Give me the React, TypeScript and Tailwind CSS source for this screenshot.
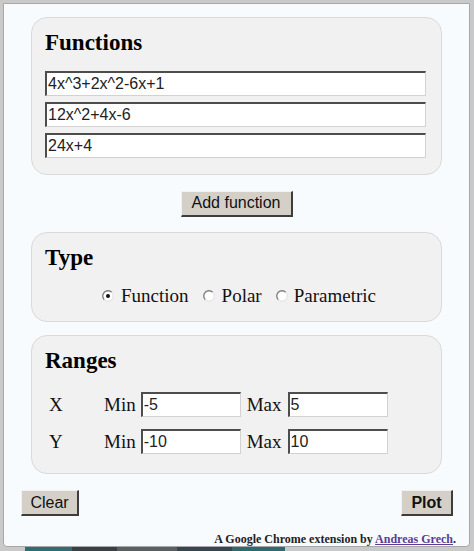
import React from "react";

const serif = "font-['Liberation_Serif','Times_New_Roman',serif]";
const sans = "font-['Liberation_Sans',Arial,sans-serif]";

const inputCls =
  `h-[25px] bg-white border-t-2 border-l-2 border-b border-r border-t-[#4d4d4d] border-l-[#4d4d4d] border-b-[#d2d2d2] border-r-[#d2d2d2] pl-[1px] text-[16px] text-[#222] outline-none ${sans}`;

const btnCls =
  `h-[26px] bg-[#d4d0c8] border-t border-l border-b-2 border-r-2 border-t-[#f2f2f2] border-l-[#f2f2f2] border-b-[#3d3d3d] border-r-[#3d3d3d] text-[16px] text-[#111] leading-none ${sans}`;

function Radio({ checked }: { checked?: boolean }) {
  return (
    <svg width="12" height="12" viewBox="0 0 12 12" className="shrink-0">
      <circle cx="6" cy="6" r="5.2" fill="#fff" />
      <path d="M2.3 9.7 A5.2 5.2 0 0 1 9.7 2.3" stroke="#7a7a7a" strokeWidth="1.3" fill="none" />
      <path d="M9.7 2.3 A5.2 5.2 0 0 1 2.3 9.7" stroke="#e6e6e6" strokeWidth="1.3" fill="none" />
      {checked && <circle cx="6" cy="6" r="2" fill="#111" />}
    </svg>
  );
}

function Panel({ children, className = "" }: { children: React.ReactNode; className?: string }) {
  return (
    <div className={`ml-[27px] w-[411px] rounded-[16px] border border-[#dadada] bg-[#f1f1f1] pl-[13px] pr-[14px] pt-[11px] ${className}`}>
      {children}
    </div>
  );
}

function Heading({ children }: { children: React.ReactNode }) {
  return <h2 className={`h-[28px] text-[23px] leading-[28px] font-bold text-black ${serif}`}>{children}</h2>;
}

export default function App() {
  const functions = ["4x^3+2x^2-6x+1", "12x^2+4x-6", "24x+4"];

  return (
    <div className="w-[474px] h-[551px] bg-[#c9c9c9] pt-[3px] overflow-hidden">
      <div className="ml-[3px] w-[467px] h-[544px] flex flex-col border border-[#a8a8a8] rounded-b-[4px] bg-[#f8fbfd]">

        {/* Functions */}
        <Panel className="mt-[13px] h-[159px]">
          <Heading>Functions</Heading>
          <div className="mt-[14px] flex flex-col gap-[6px]">
            {functions.map((f) => (
              <input key={f} defaultValue={f} className={`${inputCls} w-[381px]`} />
            ))}
          </div>
        </Panel>

        <div className="mt-[16px] flex justify-center">
          <button className={`${btnCls} w-[112px]`}>Add function</button>
        </div>

        {/* Type */}
        <Panel className="mt-[15px] h-[91px]">
          <Heading>Type</Heading>
          <div className={`mt-[12px] pl-[6px] flex items-center justify-center text-[19px] leading-[24px] text-[#111] ${serif}`}>
            <Radio checked />
            <span className="ml-[7px]">Function</span>
            <span className="ml-[14px]"><Radio /></span>
            <span className="ml-[7px]">Polar</span>
            <span className="ml-[14px]"><Radio /></span>
            <span className="ml-[6px]">Parametric</span>
          </div>
        </Panel>

        {/* Ranges */}
        <Panel className="mt-[13px] h-[140px]">
          <Heading>Ranges</Heading>
          <div className={`mt-[17px] flex flex-col gap-[12px] text-[19px] leading-[24px] text-[#111] ${serif}`}>
            {[
              ["X", "-5", "5"],
              ["Y", "-10", "10"],
            ].map(([axis, min, max]) => (
              <div key={axis} className="flex items-center">
                <span className="ml-[4px] w-[55px]">{axis}</span>
                <span>Min</span>
                <input defaultValue={min} className={`${inputCls} ml-[5px] w-[100px]`} />
                <span className="ml-[6px]">Max</span>
                <input defaultValue={max} className={`${inputCls} ml-[6px] w-[100px]`} />
              </div>
            ))}
          </div>
        </Panel>

        <div className="mt-[16px] flex justify-between pl-[17px] pr-[16px]">
          <button className={`${btnCls} w-[58px]`}>Clear</button>
          <button className={`${btnCls} w-[52px] font-bold`}>Plot</button>
        </div>

        <p className={`mt-[16px] pr-[13px] text-right text-[12px] leading-[14px] font-bold text-[#222] ${serif}`}>
          A Google Chrome extension by{" "}
          <a href="#" className="text-[#5a3a96] underline">Andreas Grech</a>.
        </p>
      </div>

      {/* whatever sits behind the popup */}
      <div className="flex h-[4px]">
        <span className="ml-[25px] w-[47px] bg-[#2f6c73]" />
        <span className="w-[45px] bg-[#3a3f43]" />
        <span className="w-[60px] bg-[#5a5f62]" />
        <span className="w-[55px] bg-[#34474d]" />
        <span className="w-[53px] bg-[#2e6a70]" />
      </div>
    </div>
  );
}
